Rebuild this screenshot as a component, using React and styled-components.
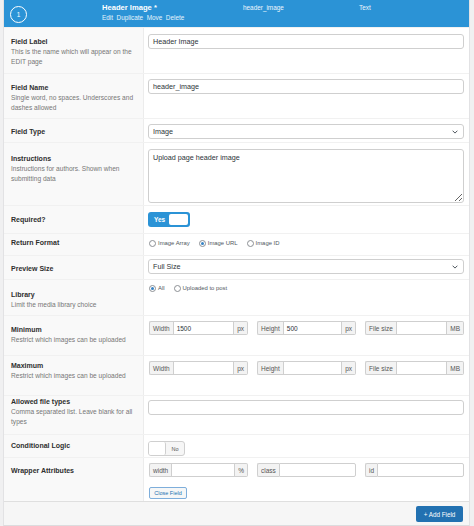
import React from 'react';
import styled, { createGlobalStyle } from 'styled-components';

const GlobalStyle = createGlobalStyle`
    body {
        margin: 0;
        background: #f0f0f1;
        font-family: "Liberation Sans", Arial, sans-serif;
        color: #333;
    }
`;

const rows = [
    { label: 'Field Label', desc: ['This is the name which will appear on the', 'EDIT page'], h: 46, lt: 8, it: 6, kind: 'text', value: 'Header Image' },
    { label: 'Field Name', desc: ['Single word, no spaces. Underscores and', 'dashes allowed'], h: 45, lt: 8, it: 5, kind: 'text', value: 'header_image' },
    { label: 'Field Type', h: 24, lt: 7, it: 5, kind: 'select', value: 'Image' },
    { label: 'Instructions', desc: ['Instructions for authors. Shown when', 'submitting data'], h: 63, lt: 10, it: 6, kind: 'textarea', value: 'Upload page header image' },
    { label: 'Required?', h: 28, lt: 8, it: 6, kind: 'yes' },
    { label: 'Return Format', h: 22, lt: 3, it: 4, kind: 'radios', options: ['Image Array', 'Image URL', 'Image ID'], checked: 1 },
    { label: 'Preview Size', h: 24, lt: 7, it: 3, kind: 'select', value: 'Full Size' },
    { label: 'Library', desc: ['Limit the media library choice'], h: 36, lt: 9, it: 3, kind: 'radios', options: ['All', 'Uploaded to post'], checked: 0 },
    { label: 'Minimum', desc: ['Restrict which images can be uploaded'], h: 40, lt: 8, it: 5, kind: 'size', values: ['1500', '500', ''] },
    { label: 'Maximum', desc: ['Restrict which images can be uploaded'], h: 40, lt: 4, it: 5, kind: 'size', values: ['', '', ''] },
    { label: 'Allowed file types', desc: ['Comma separated list. Leave blank for all', 'types'], h: 39, lt: 0, it: 4, kind: 'text', value: '' },
    { label: 'Conditional Logic', h: 23, lt: 5, it: 6, kind: 'no' },
    { label: 'Wrapper Attributes', h: 44, lt: 7, it: 5, kind: 'wrapper' },
];

function Chevron() {
    return (
        <svg width="6" height="4" viewBox="0 0 6 4">
            <path d="M0.6 0.7 L3 3.1 L5.4 0.7" fill="none" stroke="#50575e" strokeWidth="1" />
        </svg>
    );
}

function Field({ row }) {
    switch (row.kind) {
        case 'text':
            return <TextInput>{row.value}</TextInput>;
        case 'select':
            return (
                <TextInput>
                    {row.value}
                    <Chevron />
                </TextInput>
            );
        case 'textarea':
            return <TextArea readOnly defaultValue={row.value} />;
        case 'yes':
            return (
                <SwitchOn>
                    <span>Yes</span>
                    <Knob />
                </SwitchOn>
            );
        case 'no':
            return (
                <SwitchOff>
                    <Knob $off />
                    <span>No</span>
                </SwitchOff>
            );
        case 'radios':
            return (
                <RadioList>
                    {row.options.map((opt, i) => (
                        <RadioItem key={opt}>
                            <Radio $checked={i === row.checked} />
                            {opt}
                        </RadioItem>
                    ))}
                </RadioList>
            );
        case 'size':
            return (
                <GroupRow>
                    {[['Width', 'px'], ['Height', 'px'], ['File size', 'MB']].map(([pre, post], i) => (
                        <InputGroup key={pre}>
                            <Addon $side="left">{pre}</Addon>
                            <GroupInput>{row.values[i]}</GroupInput>
                            <Addon $side="right">{post}</Addon>
                        </InputGroup>
                    ))}
                </GroupRow>
            );
        case 'wrapper':
            return (
                <>
                    <GroupRow>
                        <InputGroup>
                            <Addon $side="left">width</Addon>
                            <GroupInput />
                            <Addon $side="right">%</Addon>
                        </InputGroup>
                        <InputGroup>
                            <Addon $side="left">class</Addon>
                            <GroupInput $end />
                        </InputGroup>
                        <InputGroup>
                            <Addon $side="left">id</Addon>
                            <GroupInput $end />
                        </InputGroup>
                    </GroupRow>
                    <CloseButton>Close Field</CloseButton>
                </>
            );
        default:
            return null;
    }
}

export default function App() {
    return (
        <Box>
            <GlobalStyle />
            <Header>
                <OrderCell>
                    <Order>1</Order>
                </OrderCell>
                <div>
                    <Title>Header Image *</Title>
                    <Actions>
                        <span>Edit</span>
                        <span>Duplicate</span>
                        <span>Move</span>
                        <span>Delete</span>
                    </Actions>
                </div>
                <Meta>header_image</Meta>
                <Meta>Text</Meta>
            </Header>
            {rows.map((row) => (
                <Row key={row.label} $h={row.h}>
                    <LabelCell $pt={row.lt}>
                        <Label>{row.label}</Label>
                        {row.desc && row.desc.map((line) => <Desc key={line}>{line}</Desc>)}
                    </LabelCell>
                    <InputCell $pt={row.it}>
                        <Field row={row} />
                    </InputCell>
                </Row>
            ))}
            <Footer>
                <AddButton>+ Add Field</AddButton>
            </Footer>
        </Box>
    );
}

const Box = styled.div`
    margin: 0 4px 0 3px;
    height: 525px;
    border-left: 1px solid #e2e2e4;
    border-right: 1px solid #e2e2e4;
    border-bottom: 1px solid #dcdcde;
    background: #fff;
    display: flex;
    flex-direction: column;
`;

const Header = styled.div`
    height: 27px;
    background: #2b93d6;
    color: #fff;
    display: grid;
    grid-template-columns: 98px 141px 116px 1fr;
    align-items: start;
    padding-top: 2px;
    box-sizing: border-box;
`;

const OrderCell = styled.div`
    padding: 4px 0 0 6px;
`;

const Order = styled.div`
    width: 15px;
    height: 15px;
    border: 1px solid #fff;
    border-radius: 50%;
    display: flex;
    align-items: center;
    justify-content: center;
    font-size: 6.5px;
`;

const Title = styled.div`
    font-size: 7.6px;
    font-weight: bold;
    line-height: 11px;
`;

const Actions = styled.div`
    display: flex;
    gap: 3.5px;
    font-size: 6.4px;
    line-height: 9px;
    color: #e6f3fc;
`;

const Meta = styled.div`
    font-size: 6.4px;
    line-height: 11px;
    color: #eef7fd;
`;

const Row = styled.div`
    display: flex;
    height: ${(p) => p.$h}px;
    border-top: 1px solid #f1f1f1;
    box-sizing: border-box;
    &:first-of-type {
        border-top: none;
    }
`;

const LabelCell = styled.div`
    width: 140px;
    flex-shrink: 0;
    box-sizing: border-box;
    padding: ${(p) => p.$pt}px 6px 0 7px;
    background: #f9f9f9;
    border-right: 1px solid #ececec;
`;

const Label = styled.div`
    font-size: 7px;
    font-weight: bold;
    line-height: 11px;
    color: #2f2f2f;
`;

const Desc = styled.div`
    font-size: 6.6px;
    line-height: 10px;
    color: #777;
`;

const InputCell = styled.div`
    flex: 1;
    padding: ${(p) => p.$pt}px 5px 0 4px;
    box-sizing: border-box;
`;

const TextInput = styled.div`
    height: 15px;
    box-sizing: border-box;
    border: 1px solid #cfcfcf;
    border-radius: 3px;
    padding: 0 5px 0 4px;
    display: flex;
    align-items: center;
    justify-content: space-between;
    font-size: 7.2px;
    color: #2c3338;
    background: #fff;
`;

const TextArea = styled.textarea`
    display: block;
    width: 100%;
    height: 54px;
    box-sizing: border-box;
    border: 1px solid #cfcfcf;
    border-radius: 3px;
    padding: 3px 4px;
    font-family: "Liberation Sans", Arial, sans-serif;
    font-size: 7.2px;
    color: #2c3338;
    resize: vertical;
    outline: none;
`;

const SwitchOn = styled.div`
    width: 42px;
    height: 15px;
    box-sizing: border-box;
    padding: 2px;
    border-radius: 3px;
    background: #2b93d6;
    display: flex;
    align-items: center;
    font-size: 6.5px;
    font-weight: bold;
    color: #fff;
    span {
        padding-left: 4px;
    }
`;

const Knob = styled.div`
    width: ${(p) => (p.$off ? 17 : 19)}px;
    height: ${(p) => (p.$off ? 13 : 11)}px;
    margin-left: ${(p) => (p.$off ? 0 : 'auto')};
    box-sizing: border-box;
    background: #fff;
    border-radius: 2px;
    border-right: ${(p) => (p.$off ? '1px solid #cfcfcf' : 'none')};
`;

const SwitchOff = styled.div`
    width: 37px;
    height: 15px;
    box-sizing: border-box;
    border: 1px solid #cfcfcf;
    border-radius: 3px;
    background: #f6f6f6;
    display: flex;
    align-items: center;
    font-size: 5.5px;
    color: #555;
    span {
        flex: 1;
        text-align: center;
    }
`;

const RadioList = styled.div`
    display: flex;
    gap: 9px;
    padding-left: 1px;
`;

const RadioItem = styled.div`
    display: flex;
    align-items: center;
    gap: 2px;
    font-size: 5.9px;
    line-height: 10px;
    color: #50575e;
`;

const Radio = styled.span`
    width: 7px;
    height: 7px;
    box-sizing: border-box;
    border: 1px solid #8c8f94;
    border-radius: 50%;
    background: #fff;
    display: flex;
    align-items: center;
    justify-content: center;
    &::after {
        content: '';
        width: 3px;
        height: 3px;
        border-radius: 50%;
        background: ${(p) => (p.$checked ? '#3582c4' : 'transparent')};
    }
`;

const GroupRow = styled.div`
    display: grid;
    grid-template-columns: repeat(3, 1fr);
    gap: 9px;
    padding-left: 1px;
`;

const InputGroup = styled.div`
    display: flex;
    height: 14px;
    font-size: 6.5px;
`;

const Addon = styled.div`
    display: flex;
    align-items: center;
    padding: 0 3px;
    background: #f3f3f3;
    color: #555;
    border: 1px solid #cfcfcf;
    border-radius: ${(p) => (p.$side === 'left' ? '2px 0 0 2px' : '0 2px 2px 0')};
    border-${(p) => (p.$side === 'left' ? 'right' : 'left')}: none;
`;

const GroupInput = styled.div`
    flex: 1;
    display: flex;
    align-items: center;
    padding: 0 3px;
    border: 1px solid #cfcfcf;
    border-radius: ${(p) => (p.$end ? '0 2px 2px 0' : '0')};
    color: #2c3338;
    background: #fff;
`;

const CloseButton = styled.div`
    margin: 10px 0 0 1px;
    width: 38px;
    height: 12px;
    box-sizing: border-box;
    border: 1px solid #7eaedb;
    border-radius: 2px;
    background: #f6f7f7;
    color: #2271b1;
    font-size: 5.5px;
    display: flex;
    align-items: center;
    justify-content: center;
`;

const Footer = styled.div`
    flex: 1;
    background: #f6f6f6;
    border-top: 1px solid #dfdfdf;
    display: flex;
    justify-content: flex-end;
    align-items: flex-start;
    padding: 4px 6px 0 0;
`;

const AddButton = styled.div`
    width: 47px;
    height: 16px;
    border-radius: 2px;
    background: #2271b1;
    color: #fff;
    font-size: 6.3px;
    display: flex;
    align-items: center;
    justify-content: center;
`;
